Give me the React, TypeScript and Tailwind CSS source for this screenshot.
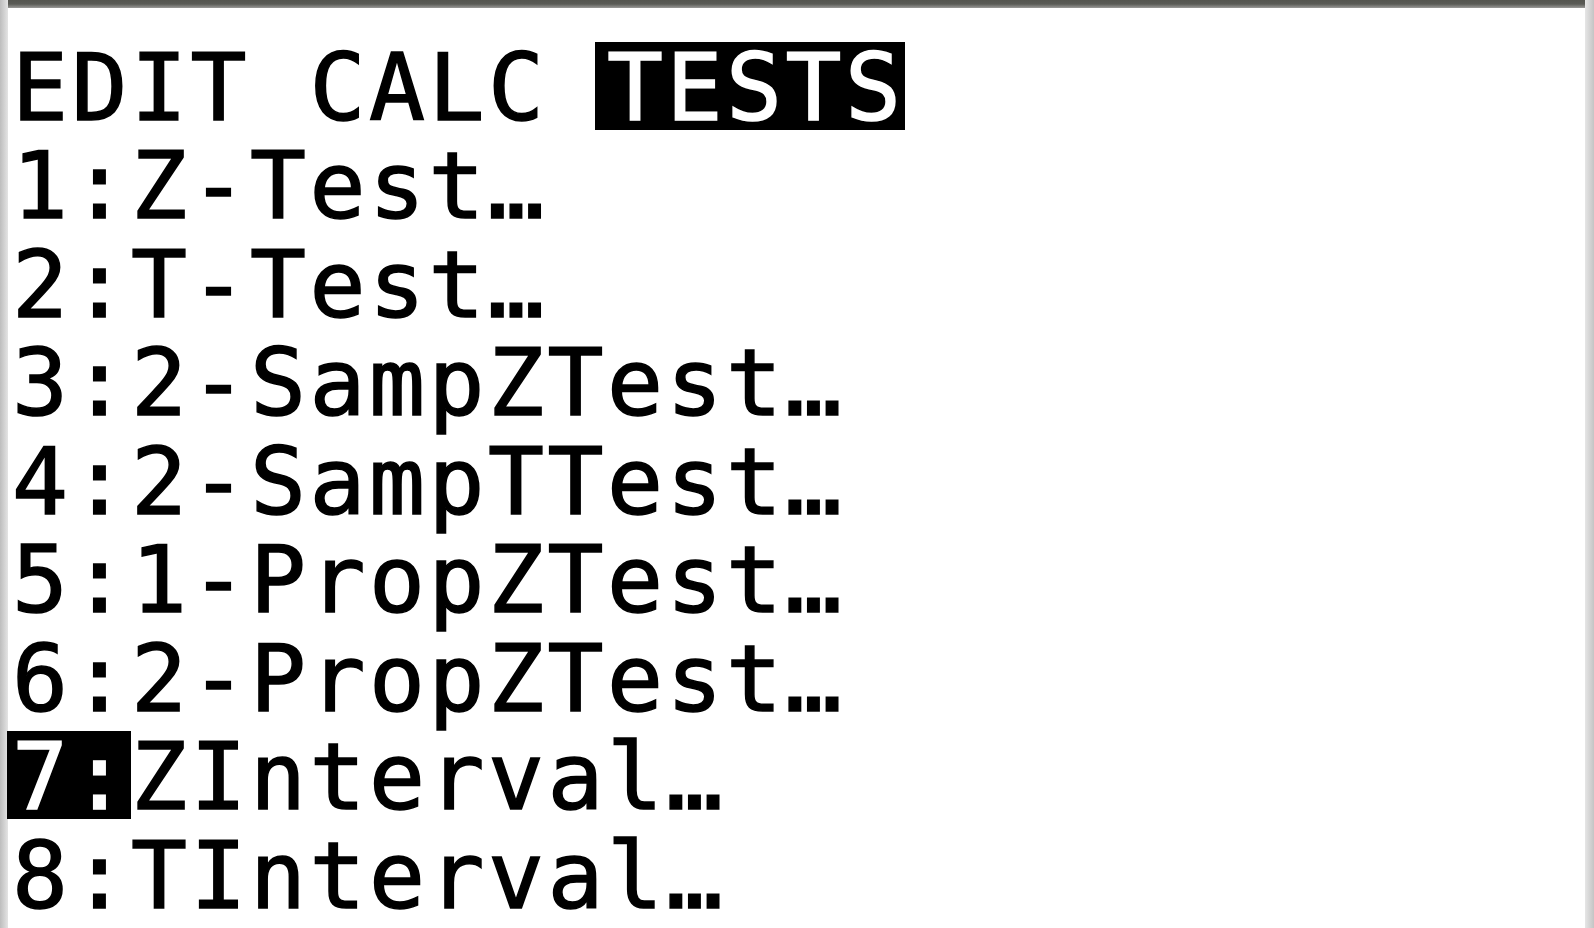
import React from 'react';

// TI-84 style STAT > TESTS menu, blown up

const items = [
  '1:Z-Test…',
  '2:T-Test…',
  '3:2-SampZTest…',
  '4:2-SampTTest…',
  '5:1-PropZTest…',
  '6:2-PropZTest…',
  '7:ZInterval…',
  '8:TInterval…',
];

const Row: React.FC<{ children: React.ReactNode }> = ({ children }) => (
  <div className="h-[98.5px] flex items-start whitespace-pre">{children}</div>
);

export default function App() {
  return (
    <div className="w-full h-[928px] flex bg-white overflow-hidden">
      {/* left bezel */}
      <div className="w-[8px] h-full bg-gradient-to-r from-[#bdbdbd] to-[#e4e4e4]" />

      <div className="flex-1 h-full flex flex-col">
        <div className="h-[8px] bg-gradient-to-b from-[#54554f] via-[#5a5b56] to-[#9a9a98]" />
        <div
          className="flex-1 flex flex-col pt-[34px] pl-[4px] text-black text-[93px] tracking-[3.5px] [-webkit-text-stroke:1.5px_currentcolor]"
          style={{ fontFamily: '"DejaVu Sans Mono", "Liberation Mono", monospace' }}
        >
          <Row>
            <span className="h-[88px] leading-[92px]">EDIT CALC </span>
            <span className="inline-block h-[88px] leading-[92px] ml-[-12px] pl-[12px] pr-[1px] mr-[-1px] bg-black text-white">
              TESTS
            </span>
          </Row>
          {items.map((item, i) => {
            if (i === 6) {
              return (
                <Row key={item}>
                  <span className="inline-block h-[88px] leading-[92px] ml-[-5px] pl-[5px] bg-black text-white">
                    {item.slice(0, 2)}
                  </span>
                  <span className="h-[88px] leading-[92px]">{item.slice(2)}</span>
                </Row>
              );
            }
            return (
              <Row key={item}>
                <span className="h-[88px] leading-[92px]">{item}</span>
              </Row>
            );
          })}
        </div>
      </div>

      {/* right bezel */}
      <div className="w-[9px] h-full bg-gradient-to-r from-[#e6e6e6] to-[#c4c4c4]" />
    </div>
  );
}
